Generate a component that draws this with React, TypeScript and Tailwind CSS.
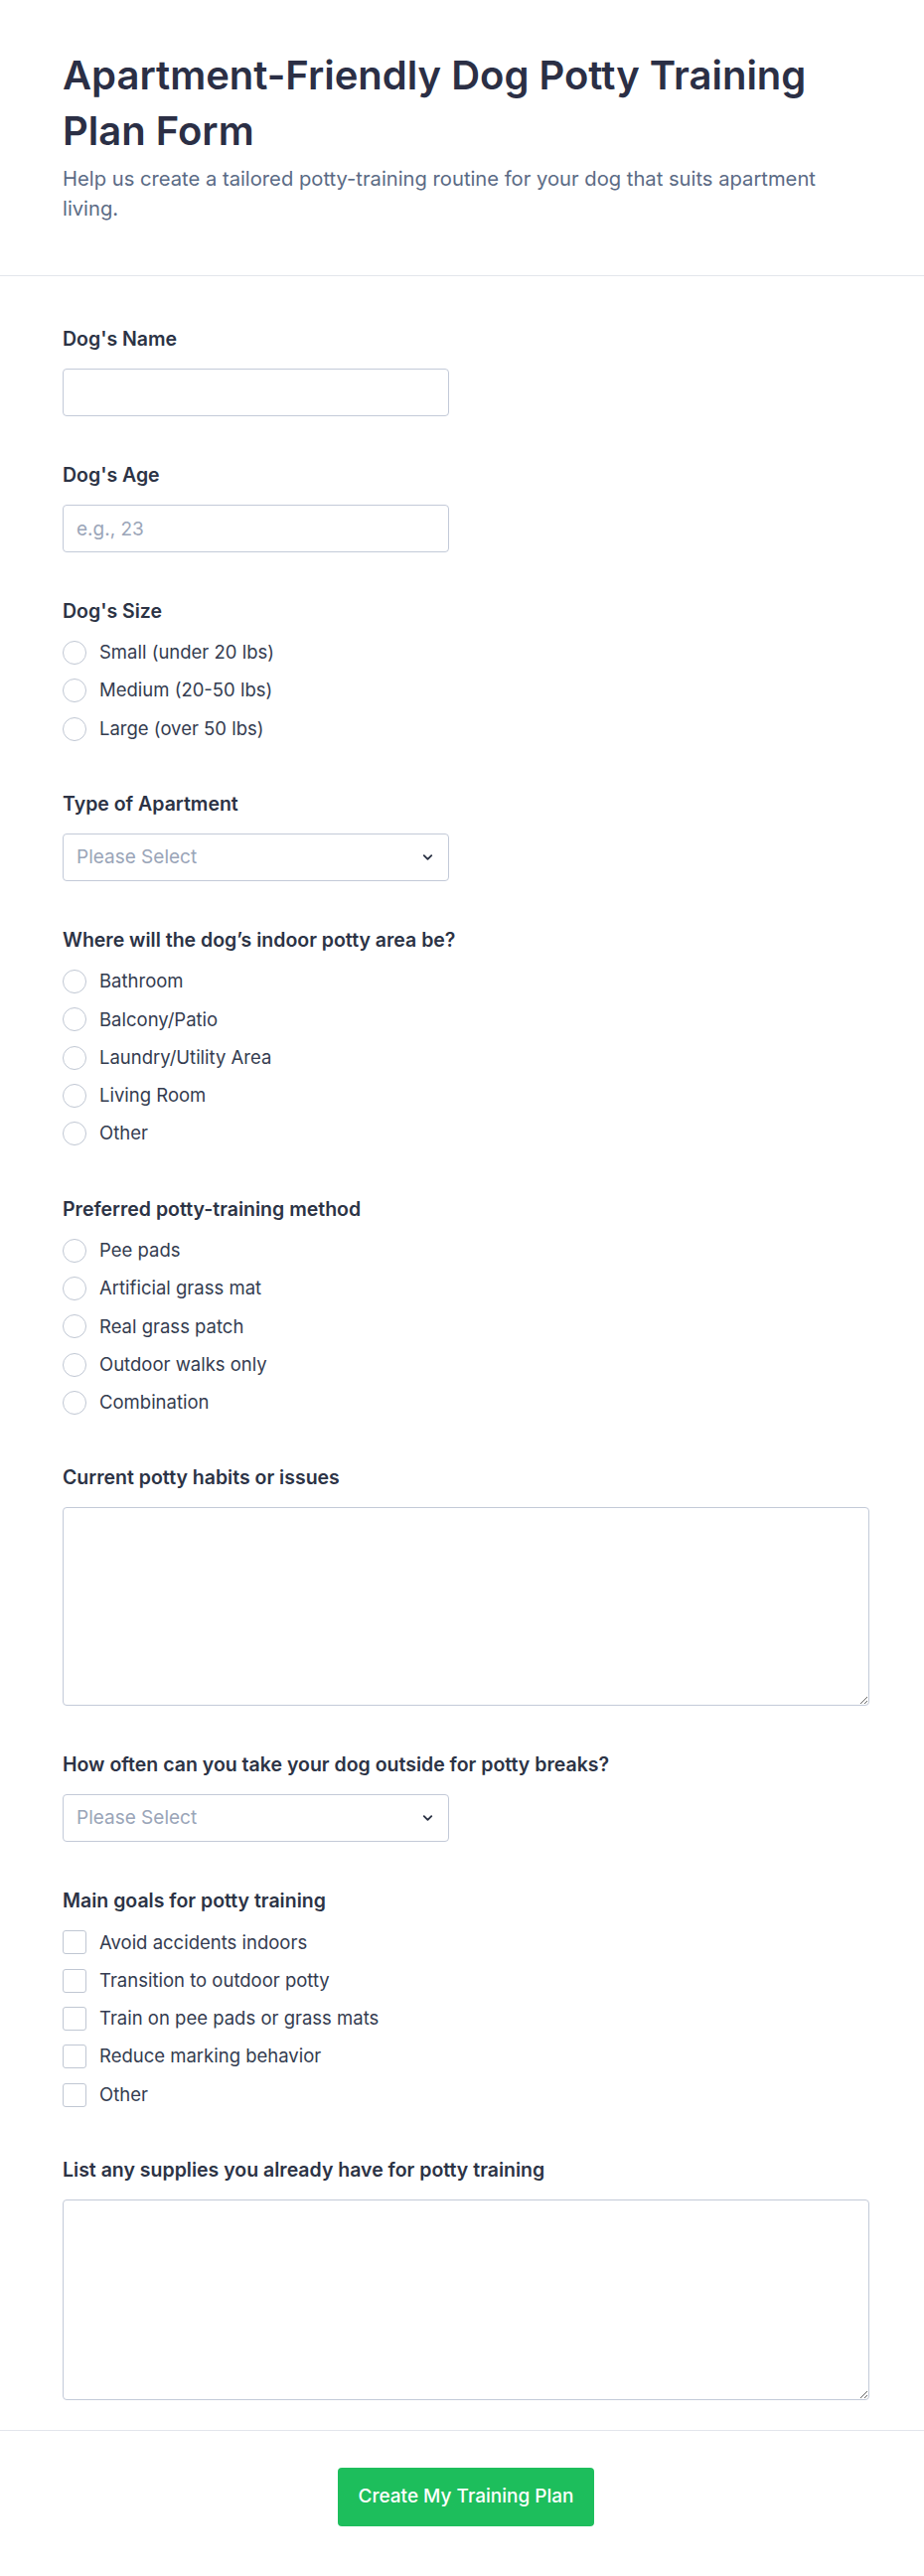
import React from 'react';
import { ChevronDown } from 'lucide-react';

const sizes = ['Small (under 20 lbs)', 'Medium (20-50 lbs)', 'Large (over 50 lbs)'];
const areas = ['Bathroom', 'Balcony/Patio', 'Laundry/Utility Area', 'Living Room', 'Other'];
const methods = ['Pee pads', 'Artificial grass mat', 'Real grass patch', 'Outdoor walks only', 'Combination'];
const goals = [
  'Avoid accidents indoors',
  'Transition to outdoor potty',
  'Train on pee pads or grass mats',
  'Reduce marking behavior',
  'Other',
];

function Label({ children }: { children: React.ReactNode }) {
  return <div className="text-[19.5px] leading-6 font-semibold text-[#2c3345]">{children}</div>;
}

function Choices({ name, items, type }: { name: string; items: string[]; type: 'radio' | 'checkbox' }) {
  return (
    <div className="mt-[18px] mb-[4.5px] flex flex-col gap-[14.3px]">
      {items.map((item) => (
        <label key={item} className="flex h-6 items-center gap-[13px] text-[18.5px] text-[#343c50]">
          <span
            className={
              type === 'radio'
                ? 'h-6 w-6 shrink-0 rounded-full border-[1.5px] border-[#c0c7d3] bg-white'
                : 'h-6 w-6 shrink-0 rounded-[3px] border-[1.5px] border-[#c0c7d3] bg-white'
            }
          />
          <input type={type} name={name} className="hidden" />
          {item}
        </label>
      ))}
    </div>
  );
}

function Select() {
  return (
    <div className="relative mt-[18px] w-[389px]">
      <select className="block h-12 w-full appearance-none rounded-[4px] border border-[#c3cad8] bg-white pl-[13px] text-[19px] text-[#9aa5b8] outline-none">
        <option>Please Select</option>
      </select>
      <ChevronDown
        className="pointer-events-none absolute right-[14px] top-1/2 -translate-y-1/2 text-[#2c3345]"
        size={15}
        strokeWidth={3}
      />
    </div>
  );
}

export default function App() {
  return (
    <div className="min-h-screen bg-white font-['Inter',sans-serif]">
      <header className="border-b border-[#e3e6ec] pl-[63px] pr-[55px] pt-12 pb-[52px]">
        <h1 className="text-[40px] leading-[56px] font-semibold text-[#2b2f45]">
          Apartment-Friendly Dog Potty Training Plan Form
        </h1>
        <p className="mt-[5px] text-[20.2px] leading-[30px] text-[#5b6b85]">
          Help us create a tailored potty-training routine for your dog that suits apartment living.
        </p>
      </header>

      <form className="flex flex-col gap-[47px] pl-[63px] pr-[55px] pt-[51px] pb-[30px]">
        <div>
          <Label>Dog's Name</Label>
          <input
            type="text"
            className="mt-[18px] block h-12 w-[389px] rounded-[4px] border border-[#c3cad8] px-[13px] text-[19px] outline-none"
          />
        </div>

        <div>
          <Label>Dog's Age</Label>
          <input
            type="text"
            placeholder="e.g., 23"
            className="mt-[18px] block h-12 w-[389px] rounded-[4px] border border-[#c3cad8] px-[13px] text-[19px] outline-none placeholder:text-[#9aa5b8]"
          />
        </div>

        <div>
          <Label>Dog's Size</Label>
          <Choices name="size" items={sizes} type="radio" />
        </div>

        <div>
          <Label>Type of Apartment</Label>
          <Select />
        </div>

        <div>
          <Label>Where will the dog’s indoor potty area be?</Label>
          <Choices name="area" items={areas} type="radio" />
        </div>

        <div>
          <Label>Preferred potty-training method</Label>
          <Choices name="method" items={methods} type="radio" />
        </div>

        <div>
          <Label>Current potty habits or issues</Label>
          <textarea className="mt-[18px] block h-[200px] w-full rounded-[4px] border border-[#c3cad8] p-[13px] text-[19px] outline-none" />
        </div>

        <div>
          <Label>How often can you take your dog outside for potty breaks?</Label>
          <Select />
        </div>

        <div>
          <Label>Main goals for potty training</Label>
          <Choices name="goals" items={goals} type="checkbox" />
        </div>

        <div>
          <Label>List any supplies you already have for potty training</Label>
          <textarea className="mt-[18px] block h-[202px] w-full rounded-[4px] border border-[#c3cad8] p-[13px] text-[19px] outline-none" />
        </div>
      </form>

      <footer className="flex justify-center border-t border-[#e3e6ec] pl-[63px] pr-[55px] pt-[37px] pb-[50px]">
        <button
          type="button"
          className="h-[59px] rounded-[4px] bg-[#1dbe5c] px-[21px] text-[19px] font-medium text-white"
        >
          Create My Training Plan
        </button>
      </footer>
    </div>
  );
}
